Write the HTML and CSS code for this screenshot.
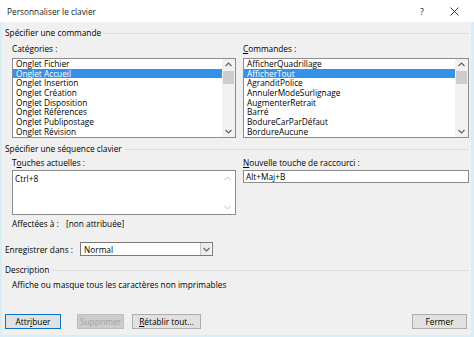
FILE: index.html
```html
<!DOCTYPE html>
<html lang="fr">
   <head>
      <meta charset="UTF-8" />
      <meta name="viewport" content="width=device-width, initial-scale=1.0" />
      <title>Personnaliser le clavier</title>
      <link rel="stylesheet" href="styles.css">
   </head>
   <body>
      <div class="window">
         <div class="titlebar">
            <span class="title">Personnaliser le clavier</span>
            <span class="help">?</span>
            <svg class="close" width="9" height="9" viewBox="0 0 9 9">
               <path d="M0.5 0.5 L8.5 8.5 M8.5 0.5 L0.5 8.5" />
            </svg>
         </div>
         <div class="dialog">
            <div class="group-title"><span>Spécifier une commande</span></div>
            <section class="cols commands">
               <div>
                  <div class="label">Caté<u>g</u>ories :</div>
                  <div class="listbox">
                     <ul class="items">
                        <li>Onglet Fichier</li>
                        <li class="selected">Onglet Accueil</li>
                        <li>Onglet Insertion</li>
                        <li>Onglet Création</li>
                        <li>Onglet Disposition</li>
                        <li>Onglet Références</li>
                        <li>Onglet Publipostage</li>
                        <li>Onglet Révision</li>
                     </ul>
                     <div class="scrollbar">
                        <svg class="arrow" width="13" height="11" viewBox="0 0 13 11"><path d="M3.5 7 L6.5 4 L9.5 7" /></svg>
                        <div class="thumb"></div>
                        <svg class="arrow" width="13" height="11" viewBox="0 0 13 11"><path d="M3.5 4 L6.5 7 L9.5 4" /></svg>
                     </div>
                  </div>
               </div>
               <div>
                  <div class="label"><u>C</u>ommandes :</div>
                  <div class="listbox">
                     <ul class="items">
                        <li>AfficherQuadrillage</li>
                        <li class="selected">AfficherTout</li>
                        <li>AgranditPolice</li>
                        <li>AnnulerModeSurlignage</li>
                        <li>AugmenterRetrait</li>
                        <li>Barré</li>
                        <li>BodureCarParDéfaut</li>
                        <li>BordureAucune</li>
                     </ul>
                     <div class="scrollbar">
                        <svg class="arrow" width="13" height="11" viewBox="0 0 13 11"><path d="M3.5 7 L6.5 4 L9.5 7" /></svg>
                        <div class="thumb"></div>
                        <svg class="arrow" width="13" height="11" viewBox="0 0 13 11"><path d="M3.5 4 L6.5 7 L9.5 4" /></svg>
                     </div>
                  </div>
               </div>
            </section>

            <div class="group-title second"><span>Spécifier une séquence clavier</span></div>
            <section class="cols sequence">
               <div>
                  <div class="label">T<u>o</u>uches actuelles :</div>
                  <div class="keybox">
                     <span>Ctrl+8</span>
                     <div class="keyscroll">
                        <svg width="11" height="9" viewBox="0 0 11 9"><path d="M2.5 6 L5.5 3 L8.5 6" /></svg>
                        <svg width="11" height="9" viewBox="0 0 11 9"><path d="M2.5 3 L5.5 6 L8.5 3" /></svg>
                     </div>
                  </div>
                  <div class="assigned">
                     <span class="assigned-label">Affectées à :</span>
                     <span>[non attribuée]</span>
                  </div>
               </div>
               <div>
                  <div class="label"><u>N</u>ouvelle touche de raccourci :</div>
                  <div class="input">Alt+Maj+B</div>
               </div>
            </section>

            <div class="save-row">
               <span class="save-label">Enre<u>g</u>istrer dans :</span>
               <div class="select">
                  <span>Normal</span>
                  <span class="drop">
                     <svg width="9" height="7" viewBox="0 0 9 7"><path d="M1.5 2 L4.5 5 L7.5 2" /></svg>
                  </span>
               </div>
            </div>

            <div class="group-title third"><span>Description</span></div>
            <p class="desc">Affiche ou masque tous les caractères non imprimables</p>

            <div class="buttons">
               <button class="button default">Attr<u>i</u>buer</button>
               <button class="button" disabled>Supprimer</button>
               <button class="button reset"><u>R</u>établir tout...</button>
               <button class="button close-btn">Fermer</button>
            </div>
         </div>
      </div>
   </body>
</html>
```

FILE: styles.css
```css
body {
   margin: 0;
   padding: 0;
   font-family: 'Open Sans', 'Noto Sans', sans-serif;
   font-size: 8.3px;
   color: #000;
}

u {
   text-decoration-thickness: 1px;
   text-underline-offset: 1px;
}

div.window {
   width: 474px;
   height: 337px;
   display: flex;
   flex-direction: column;
}

div.titlebar {
   height: 22px;
   flex: none;
   background-color: #fff;
   display: flex;
   align-items: center;
   padding-left: 7px;
}

span.title {
   flex: 1;
   color: #1a1a1a;
}

span.help {
   font-size: 9px;
   margin-right: 26px;
   color: #222;
}

svg.close {
   margin-right: 15px;
}

svg.close path {
   stroke: #222;
   stroke-width: 0.9;
   fill: none;
}

div.dialog {
   flex: 1;
   display: flex;
   flex-direction: column;
   background-color: #f0f0f0;
   border-left: 2px solid #d6eef8;
   border-right: 3px solid #d6eef8;
   border-bottom: 2px solid #d6eef8;
   padding: 0 2px 0 3px;
}

div.group-title {
   height: 12px;
   line-height: 12px;
   margin-top: 5px;
   display: flex;
   align-items: center;
}

div.group-title::after {
   content: '';
   flex: 1;
   margin-left: 3px;
   border-top: 1px solid #dcdcdc;
}

div.group-title.second {
   margin-top: 5px;
}

div.group-title.third {
   margin-top: 8px;
}

section.cols {
   display: grid;
   grid-template-columns: 224px 1fr;
   column-gap: 7px;
   padding-left: 7px;
}

div.label {
   line-height: 10px;
}

section.commands {
   margin-top: 5px;
}

section.commands div.label {
   margin-bottom: 4px;
}

section.sequence {
   margin-top: 3px;
}

section.sequence div.label {
   margin-bottom: 2px;
}

div.listbox {
   height: 80px;
   box-sizing: border-box;
   border: 1px solid #8c8c8c;
   background-color: #fff;
   display: flex;
}

ul.items {
   flex: 1;
   margin: 0;
   padding: 0;
   list-style: none;
}

ul.items li {
   height: 9.7px;
   line-height: 9.7px;
   padding-left: 3px;
   white-space: nowrap;
}

ul.items li.selected {
   background-color: #3391ea;
   color: #fff;
}

div.scrollbar {
   width: 13px;
   background-color: #f2f2f2;
   display: flex;
   flex-direction: column;
}

div.thumb {
   height: 13px;
   margin: 1px 1px 0;
   background-color: #cdcdcd;
}

svg.arrow:last-child {
   margin-top: auto;
}

div.scrollbar path,
div.select path {
   stroke: #606060;
   stroke-width: 1.1;
   fill: none;
}

div.keybox {
   height: 45px;
   box-sizing: border-box;
   border: 1px solid #8c8c8c;
   background-color: #fff;
   display: flex;
   padding: 2px 0 0 2px;
}

div.keybox span {
   flex: 1;
}

div.keyscroll {
   width: 11px;
   display: flex;
   flex-direction: column;
   justify-content: space-between;
   padding: 1px 2px 2px 0;
}

div.keyscroll path {
   stroke: #c2c2c2;
   stroke-width: 1;
   fill: none;
}

div.input {
   height: 13px;
   box-sizing: border-box;
   border: 1px solid #8c8c8c;
   background-color: #fff;
   line-height: 11px;
   padding-left: 2px;
}

div.assigned {
   margin-top: 4px;
   line-height: 10px;
   display: flex;
}

span.assigned-label {
   width: 54px;
}

div.save-row {
   margin-top: 13px;
   display: flex;
   align-items: center;
}

span.save-label {
   width: 75px;
}

div.select {
   width: 133px;
   height: 14px;
   box-sizing: border-box;
   border: 1px solid #7a7a7a;
   background-color: #fff;
   display: flex;
   align-items: center;
   padding-left: 3px;
}

div.select span:first-child {
   flex: 1;
}

span.drop {
   width: 10px;
   height: 12px;
   margin-right: 1px;
   border-left: 1px solid #c4c4c4;
   background-color: #ececec;
   display: flex;
   align-items: center;
   justify-content: center;
}

p.desc {
   margin: 4px 0 0 7px;
   line-height: 10px;
}

div.buttons {
   margin-top: auto;
   margin-bottom: 6px;
   display: flex;
}

button.button {
   height: 15px;
   padding: 0;
   border: 1px solid #adadad;
   background-color: #e1e1e1;
   font-family: 'Open Sans', 'Noto Sans', sans-serif;
   font-size: 8.3px;
   color: #000;
}

button.default {
   width: 56px;
   border-color: #0a72c8;
}

button:disabled {
   width: 47px;
   margin-left: 16px;
   background-color: #cccccc;
   border-color: #bfbfbf;
   color: #a3a3a3;
}

button.reset {
   width: 69px;
   margin-left: 8px;
}

button.close-btn {
   width: 55px;
   margin-left: auto;
   margin-right: 2px;
}
```
